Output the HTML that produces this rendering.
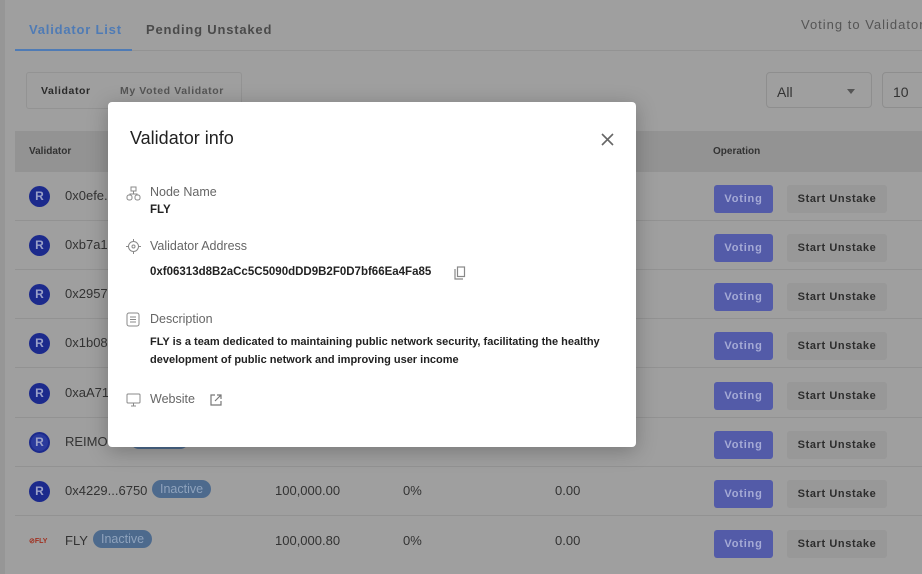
<!DOCTYPE html>
<html><head><meta charset="utf-8"><style>
*{box-sizing:border-box;margin:0;padding:0}
body{width:922px;height:574px;overflow:hidden;background:#9f9f9f;font-family:"Liberation Sans",Arial,sans-serif;position:relative;color:#2a2a2a}
.abs{position:absolute}
.strip{left:0;top:0;width:5px;height:574px;background:#969696}
.tab{font-size:13px;letter-spacing:.8px;font-weight:bold;white-space:nowrap}
.row{position:absolute;left:15px;width:907px;height:49px;border-bottom:1px solid #929292}
.av{position:absolute;left:14px;top:14px;width:21px;height:21px;border-radius:50%;background:#1c2a8c;color:#9aa0c8;font-weight:bold;font-size:12px;text-align:center;line-height:21px}
.addr{position:absolute;left:50px;top:16px;font-size:13px;color:#333}
.badge{position:absolute;top:13px;height:18px;border-radius:9px;background:#4d6a8d;color:#8fa3bd;font-size:12.5px;line-height:18px;padding:0 8px}
.vote{position:absolute;left:699px;top:13px;width:59px;height:28px;background:#535ba8;border-radius:3px;color:#a6abd6;font-size:11px;font-weight:bold;letter-spacing:.8px;text-align:center;line-height:28px}
.uns{position:absolute;left:772px;top:13px;width:100px;height:28px;background:#989898;border-radius:3px;color:#2d2d2d;font-size:11px;font-weight:bold;letter-spacing:.6px;text-align:center;line-height:28px}
.num{position:absolute;top:16px;font-size:13px;color:#333}
.modal{left:108px;top:102px;width:528px;height:345px;background:#fff;border-radius:4px;box-shadow:0 4px 20px rgba(0,0,0,.25)}
.lbl{position:absolute;left:42px;font-size:12.5px;color:#666}
.val{position:absolute;left:42px;font-size:11.5px;font-weight:bold;color:#222;white-space:nowrap}
.ic{position:absolute;left:18px}
</style></head><body>
<div class="abs strip"></div>
<div class="abs tab" style="left:29px;top:22px;color:#4f7bb5">Validator List</div>
<div class="abs tab" style="left:146px;top:22px;color:#4a4a4a">Pending Unstaked</div>
<div class="abs tab" style="left:801px;top:17px;color:#555;font-weight:normal;letter-spacing:1px">Voting to Validator</div>
<div class="abs" style="left:15px;top:49px;width:117px;height:2px;background:#4f7bb5"></div>
<div class="abs" style="left:132px;top:50px;width:790px;height:1px;background:#939393"></div>
<div class="abs" style="left:26px;top:72px;width:216px;height:37px;border:1px solid #939393;border-radius:3px"></div>
<div class="abs" style="left:41px;top:85px;font-size:10.5px;font-weight:bold;letter-spacing:.6px;color:#2a2a2a">Validator</div>
<div class="abs" style="left:120px;top:85px;font-size:10.5px;font-weight:bold;letter-spacing:.6px;color:#555">My Voted Validator</div>
<div class="abs" style="left:766px;top:72px;width:106px;height:36px;border:1px solid #8e8e8e;border-radius:4px;font-size:14px;color:#333;padding:11px 10px">All<span style="position:absolute;left:80px;top:16px;border:4px solid transparent;border-top:5px solid #555"></span></div>
<div class="abs" style="left:882px;top:72px;width:60px;height:36px;border:1px solid #8e8e8e;border-radius:4px;font-size:14px;color:#333;padding:11px 10px">10</div>
<div class="abs" style="left:15px;top:131px;width:907px;height:41px;background:#939393"></div>
<div class="abs" style="left:29px;top:146px;font-size:10px;font-weight:bold;color:#333">Validator</div>
<div class="abs" style="left:713px;top:146px;font-size:10px;font-weight:bold;color:#333">Operation</div>

<div class="row" style="top:172px"><div class="av">R</div><div class="addr">0x0efe...</div><div class="vote">Voting</div><div class="uns">Start Unstake</div></div>
<div class="row" style="top:221px"><div class="av">R</div><div class="addr">0xb7a1...</div><div class="vote">Voting</div><div class="uns">Start Unstake</div></div>
<div class="row" style="top:270px"><div class="av">R</div><div class="addr">0x2957...</div><div class="vote">Voting</div><div class="uns">Start Unstake</div></div>
<div class="row" style="top:319px"><div class="av">R</div><div class="addr">0x1b08...</div><div class="vote">Voting</div><div class="uns">Start Unstake</div></div>
<div class="row" style="top:369px"><div class="av">R</div><div class="addr">0xaA71...</div><div class="vote">Voting</div><div class="uns">Start Unstake</div></div>
<div class="row" style="top:418px"><div class="av" style="background:#2a3a9c;border:2px solid #1c2a8c;line-height:17px">R</div><div class="addr">REIMOC</div><div class="badge" style="left:115px">Inactive</div><div class="vote">Voting</div><div class="uns">Start Unstake</div></div>
<div class="row" style="top:467px"><div class="av">R</div><div class="addr">0x4229...6750</div><div class="badge" style="left:137px">Inactive</div><div class="num" style="left:260px">100,000.00</div><div class="num" style="left:388px">0%</div><div class="num" style="left:540px">0.00</div><div class="vote">Voting</div><div class="uns">Start Unstake</div></div>
<div class="row" style="top:517px;border:none"><div class="abs" style="left:14px;top:20px;font-size:7px;color:#a03020;font-weight:bold">⊘FLY</div><div class="addr">FLY</div><div class="badge" style="left:78px">Inactive</div><div class="num" style="left:260px">100,000.80</div><div class="num" style="left:388px">0%</div><div class="num" style="left:540px">0.00</div><div class="vote">Voting</div><div class="uns">Start Unstake</div></div>

<div class="abs modal">
<div class="abs" style="left:22px;top:26px;font-size:18px;color:#222">Validator info</div>
<svg class="abs" style="left:493px;top:31px" width="13" height="13" viewBox="0 0 13 13"><path d="M1 1L12 12M12 1L1 12" stroke="#666" stroke-width="1.6"/></svg>
<svg class="ic" style="top:84px" width="15" height="15" viewBox="0 0 15 15" fill="none" stroke="#888" stroke-width="1"><rect x="5" y="1" width="5" height="4"/><path d="M7.5 5v3M3.5 8h8"/><rect x="1" y="9" width="5" height="5" rx="2"/><rect x="9" y="9" width="5" height="5" rx="2"/></svg>
<div class="lbl" style="top:83px">Node Name</div>
<div class="val" style="top:102px">FLY</div>
<svg class="ic" style="top:137px" width="15" height="15" viewBox="0 0 15 15" fill="none" stroke="#888" stroke-width="1"><circle cx="7.5" cy="7.5" r="5"/><circle cx="7.5" cy="7.5" r="1.5"/><path d="M7.5 0v2.5M7.5 12.5V15M0 7.5h2.5M12.5 7.5H15"/></svg>
<div class="lbl" style="top:137px">Validator Address</div>
<div class="val" style="top:164px">0xf06313d8B2aCc5C5090dDD9B2F0D7bf66Ea4Fa85</div>
<svg class="abs" style="left:346px;top:164px" width="12" height="14" viewBox="0 0 12 14" fill="none" stroke="#888" stroke-width="1.2"><path d="M1 3v10h8"/><rect x="3.5" y="1" width="7" height="9.5"/></svg>
<svg class="ic" style="top:210px" width="14" height="15" viewBox="0 0 14 15" fill="none" stroke="#888" stroke-width="1"><rect x="1" y="1" width="12" height="13" rx="2"/><path d="M4 5h6M4 7.5h6M4 10h6"/></svg>
<div class="lbl" style="top:210px">Description</div>
<div class="val" style="top:231px;line-height:18px;font-size:11px">FLY is a team dedicated to maintaining public network security, facilitating the healthy<br>development of public network and improving user income</div>
<svg class="ic" style="top:291px" width="15" height="14" viewBox="0 0 15 14" fill="none" stroke="#888" stroke-width="1"><rect x="1" y="1" width="13" height="9" rx="1"/><path d="M7.5 10v3M5 13h5"/></svg>
<div class="lbl" style="top:290px">Website</div>
<svg class="abs" style="left:102px;top:292px" width="12" height="12" viewBox="0 0 12 12" fill="none" stroke="#777" stroke-width="1.2"><path d="M5 1H1v10h10V7M7 1h4v4M11 1L5 7"/></svg>
</div>
</body></html>
